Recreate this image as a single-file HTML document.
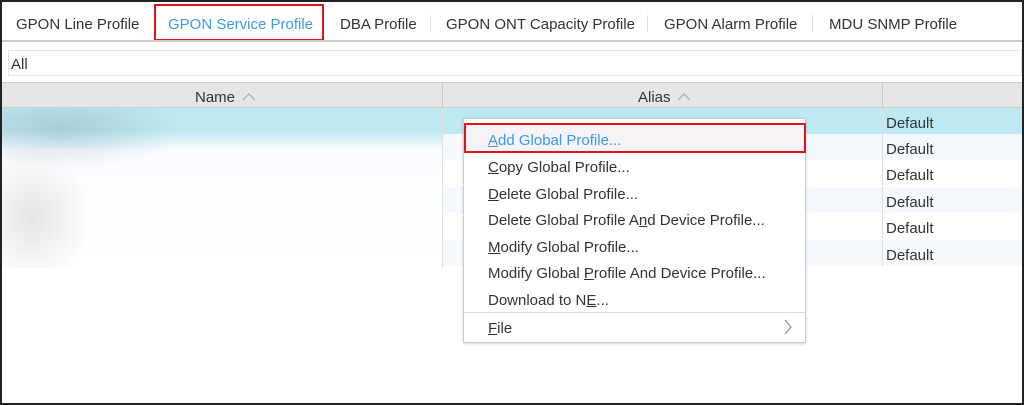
<!DOCTYPE html>
<html><head><style>
*{margin:0;padding:0;box-sizing:border-box}
body{width:1024px;height:405px;background:#fff;font-family:"Liberation Sans",Arial,sans-serif;font-size:15px;color:#333;position:relative;overflow:hidden}
.frame{position:absolute;left:0;top:0;width:1024px;height:405px;border:2px solid #222;pointer-events:none;z-index:10}
.tab{position:absolute;top:16px;font-size:15px;color:#333}
.sep{position:absolute;top:15px;width:1px;height:17px;background:#ddd}
.abs{position:absolute}
.row{position:absolute;left:2px;width:1020px;height:26px}
.cell3{position:absolute;left:882px;width:140px;height:26px;border-left:1px solid #ddd;padding:7px 0 0 3px;font-size:15px;color:#333}
.mi{position:absolute;left:488px;font-size:15px;color:#333}
</style></head><body>
<div class="tab" style="left:16px">GPON Line Profile</div>
<div class="tab" style="left:168px;color:#3a9be8">GPON Service Profile</div>
<div class="abs" style="left:154px;top:4px;width:170px;height:37px;border:2px solid #e0131c"></div>
<div class="tab" style="left:340px">DBA Profile</div>
<div class="sep" style="left:430px"></div>
<div class="tab" style="left:446px">GPON ONT Capacity Profile</div>
<div class="sep" style="left:647px"></div>
<div class="tab" style="left:664px">GPON Alarm Profile</div>
<div class="sep" style="left:812px"></div>
<div class="tab" style="left:829px">MDU SNMP Profile</div>
<div class="abs" style="left:2px;top:40px;width:1020px;height:2px;background:#ccc"></div>
<div class="abs" style="left:8px;top:50px;width:1014px;height:26px;border:1px solid #e4e4e4;background:#fff;padding:5px 0 0 2px;font-size:15px">All</div>
<div class="abs" style="left:2px;top:82px;width:1020px;height:26px;background:#e6e6e6;border-top:1px solid #ccc;border-bottom:1px solid #ccc"></div>
<div class="abs" style="left:442px;top:82px;width:1px;height:26px;background:#c8c8c8"></div>
<div class="abs" style="left:882px;top:82px;width:1px;height:26px;background:#c8c8c8"></div>
<div class="abs" style="left:195px;top:89px">Name</div>
<svg class="abs" style="left:242px;top:93px" width="14" height="8"><path d="M1 7 L7 1 L13 7" fill="none" stroke="#aaa" stroke-width="1.2"/></svg>
<div class="abs" style="left:638px;top:89px">Alias</div>
<svg class="abs" style="left:677px;top:93px" width="14" height="8"><path d="M1 7 L7 1 L13 7" fill="none" stroke="#aaa" stroke-width="1.2"/></svg>
<div class="row" style="top:108px;background:#bde9f3"></div>
<div class="row" style="top:134px;background:#f5f8fd"></div>
<div class="row" style="top:160px;background:#fff"></div>
<div class="row" style="top:187px;background:#f5f8fd"></div>
<div class="row" style="top:213px;background:#fff"></div>
<div class="row" style="top:240px;background:#f5f8fd"></div>
<div class="abs" style="left:2px;top:108px;width:440px;height:160px;background:radial-gradient(ellipse 120px 40px at 60px 20px,rgba(150,180,190,.5),transparent),radial-gradient(ellipse 60px 70px at 30px 110px,rgba(200,200,200,.45),transparent),linear-gradient(#bde9f3 0,#bde9f3 22px,#fafcff 42px,#fff)"></div>
<div class="abs" style="left:442px;top:108px;width:1px;height:160px;background:#e2e2e2"></div>
<div class="cell3" style="top:108px">Default</div>
<div class="cell3" style="top:134px">Default</div>
<div class="cell3" style="top:160px">Default</div>
<div class="cell3" style="top:187px">Default</div>
<div class="cell3" style="top:213px">Default</div>
<div class="cell3" style="top:240px">Default</div>
<div class="abs" style="left:463px;top:118px;width:343px;height:225px;background:#fff;border:1px solid #ccc;box-shadow:0 1px 3px rgba(0,0,0,.15)"></div>
<div class="abs" style="left:464px;top:123px;width:342px;height:30px;background:#f7f3f7;border:2px solid #e0131c"></div>
<div class="mi" style="top:132px;color:#3a9be8"><u>A</u>dd Global Profile...</div>
<div class="mi" style="top:159px"><u>C</u>opy Global Profile...</div>
<div class="mi" style="top:186px"><u>D</u>elete Global Profile...</div>
<div class="mi" style="top:212px">Delete Global Profile A<u>n</u>d Device Profile...</div>
<div class="mi" style="top:239px"><u>M</u>odify Global Profile...</div>
<div class="mi" style="top:265px">Modify Global <u>P</u>rofile And Device Profile...</div>
<div class="mi" style="top:292px">Download to N<u>E</u>...</div>
<div class="abs" style="left:464px;top:312px;width:341px;height:1px;background:#ddd"></div>
<div class="mi" style="top:320px"><u>F</u>ile</div>
<svg class="abs" style="left:782px;top:318px" width="12" height="18"><path d="M3 2 L9 9 L3 16" fill="none" stroke="#999" stroke-width="1.3"/></svg>
<div class="frame"></div>
</body></html>
